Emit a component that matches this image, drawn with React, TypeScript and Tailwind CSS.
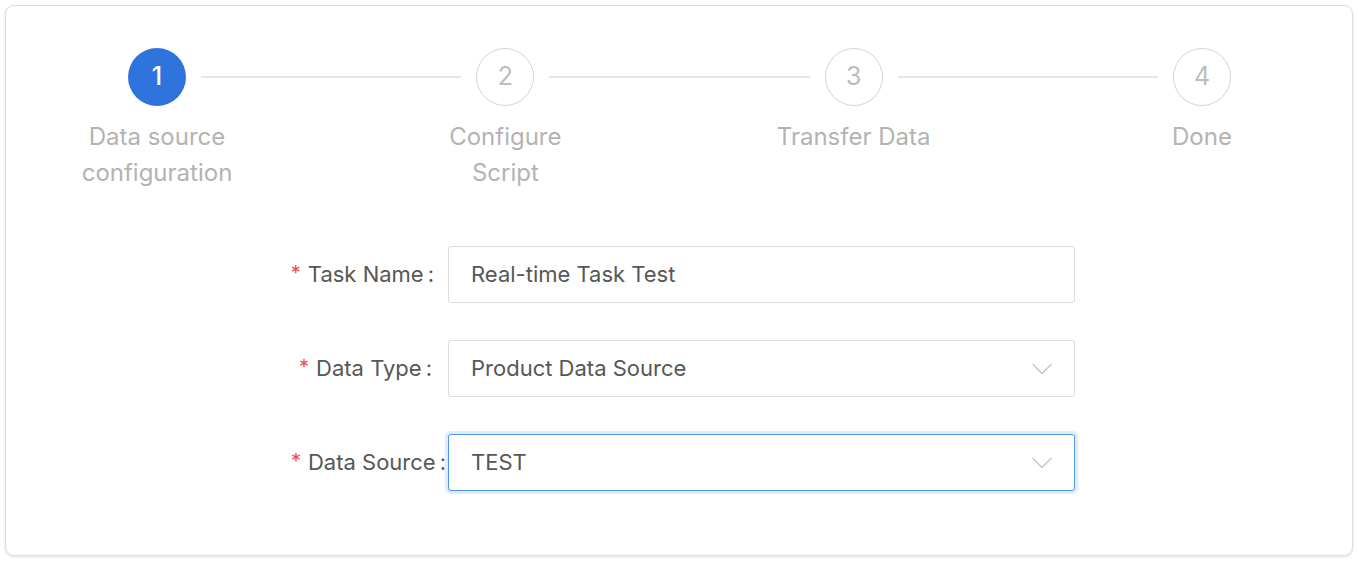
import React from "react";

const steps = [
  { n: "1", label: "Data source configuration", active: true },
  { n: "2", label: "Configure Script" },
  { n: "3", label: "Transfer Data" },
  { n: "4", label: "Done" },
];

function Chevron() {
  return (
    <svg width="20" height="12" viewBox="0 0 20 12" fill="none">
      <path d="M1 1.5 L10 10.5 L19 1.5" stroke="#c4c4c4" strokeWidth="1.4" strokeLinecap="round" strokeLinejoin="round" />
    </svg>
  );
}

function Step({ n, label, active }: { n: string; label: string; active?: boolean }) {
  return (
    <div className="w-[170px] flex flex-col items-center shrink-0">
      <div
        className={
          active
            ? "w-[58px] h-[58px] rounded-full bg-[#2f74dc] flex items-center justify-center text-white text-[25px] font-medium"
            : "w-[58px] h-[58px] rounded-full border-[1.5px] border-[#d4d4d4] bg-white flex items-center justify-center text-[#bdbdbd] text-[25px]"
        }
      >
        {n}
      </div>
      <div className="mt-[13px] text-center text-[24px] leading-[36px] text-[#b3b3b3]">{label}</div>
    </div>
  );
}

function Connector() {
  return (
    <div className="flex-1 -mx-[41px] h-[58px] flex items-center">
      <div className="w-full h-[1.5px] bg-[#e6e6e6]" />
    </div>
  );
}

function Row({
  label,
  value,
  select,
  focused,
  pr,
}: {
  label: string;
  value: string;
  select?: boolean;
  focused?: boolean;
  pr: string;
}) {
  return (
    <div className="flex items-center h-[57px]">
      <div className={"w-[198px] flex justify-end items-center text-[22px] text-[#575757] whitespace-nowrap " + pr}>
        <span className="text-[#f04a4a] text-[20px] mr-[7px] relative -top-[2px]">*</span>
        <span>{label}</span>
        <span className="ml-[4px]">:</span>
      </div>
      <div
        className={
          focused
            ? "w-[627px] h-[57px] rounded-[3px] border-[1.5px] border-[#4f96ee] shadow-[0_0_0_3px_rgba(79,150,238,0.18)] bg-white flex items-center justify-between pl-[22px] pr-[22px] text-[22px] text-[#575757]"
            : "w-[627px] h-[57px] rounded-[3px] border-[1.5px] border-[#dcdcdc] bg-white flex items-center justify-between pl-[22px] pr-[22px] text-[22px] text-[#575757]"
        }
      >
        <span>{value}</span>
        {select ? <Chevron /> : null}
      </div>
    </div>
  );
}

export default function App() {
  return (
    <div className="w-[1358px] h-[562px] bg-white p-[5px]" style={{ fontFamily: "Inter, 'Noto Sans', sans-serif" }}>
      <div className="h-[551px] rounded-[9px] border border-[#dedede] shadow-[0_1px_3px_rgba(0,0,0,0.12)] bg-white pt-[42px]">
        <div className="flex pl-[66px] pr-[65px]">
          <Step {...steps[0]} />
          <Connector />
          <Step {...steps[1]} />
          <Connector />
          <Step {...steps[2]} />
          <Connector />
          <Step {...steps[3]} />
        </div>
        <div className="mt-[55px] ml-[244px] flex flex-col gap-[37px]">
          <Row label="Task Name" value="Real-time Task Test" pr="pr-[14px]" />
          <Row label="Data Type" value="Product Data Source" select pr="pr-[16px]" />
          <Row label="Data Source" value="TEST" select focused pr="pr-[2px]" />
        </div>
      </div>
    </div>
  );
}
